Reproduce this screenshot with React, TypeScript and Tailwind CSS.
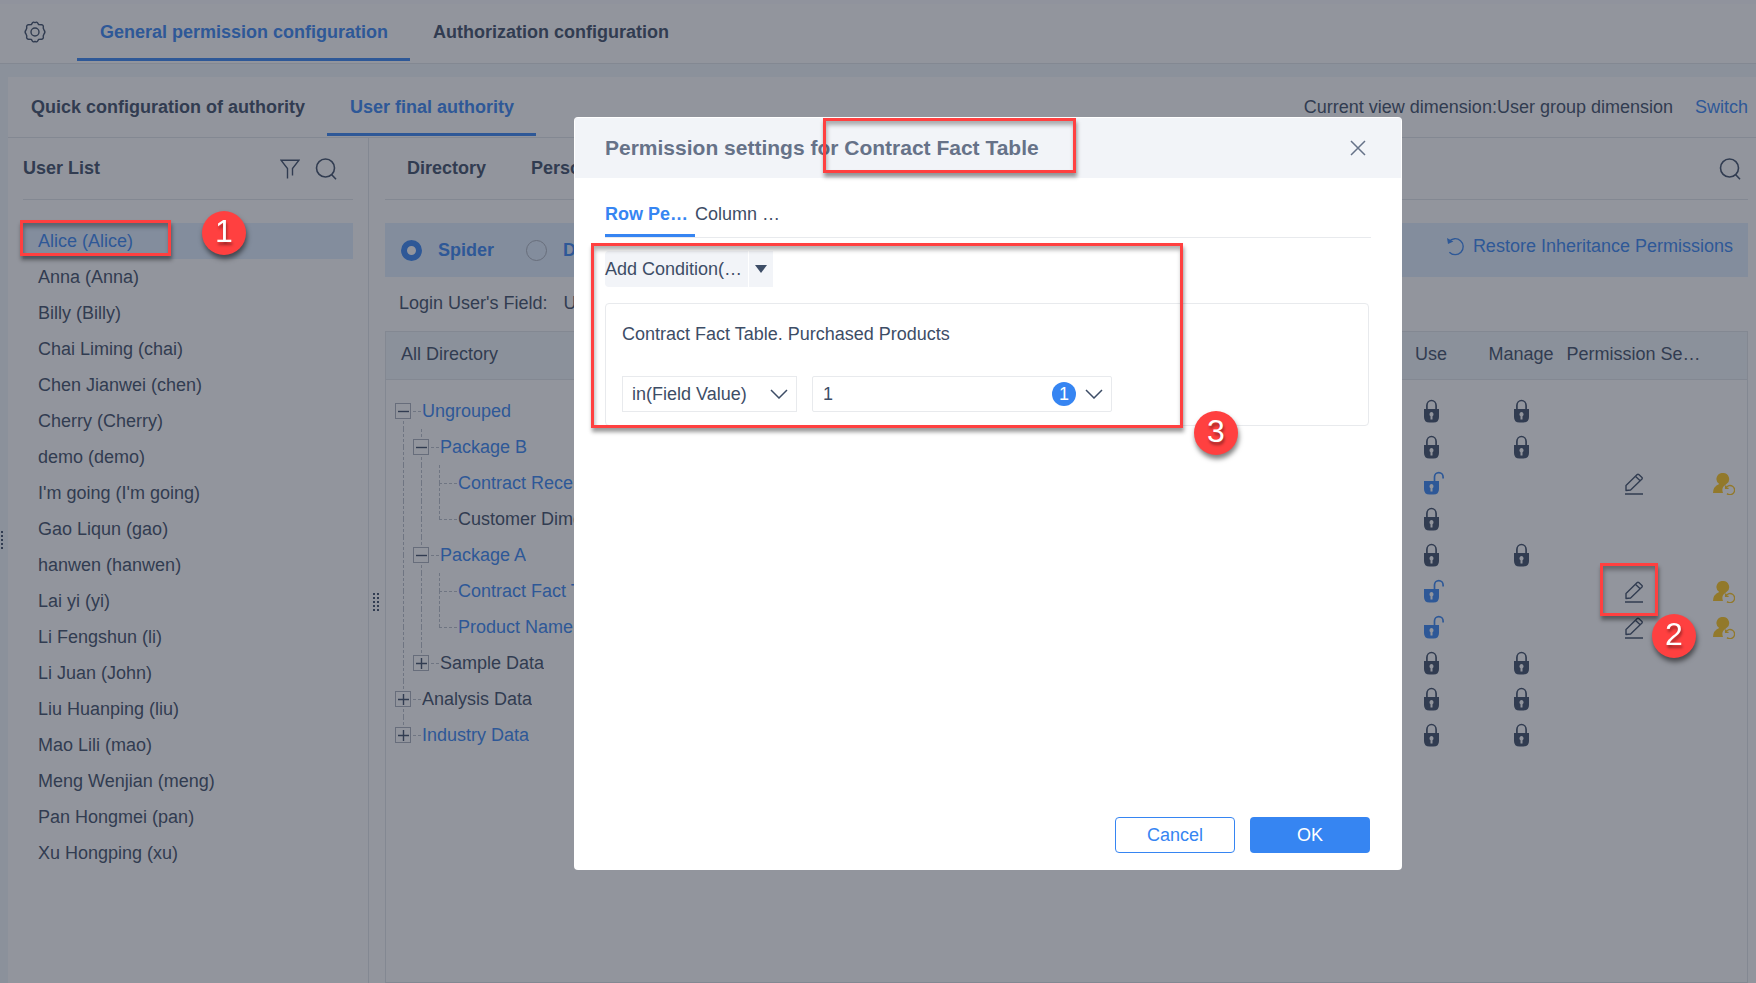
import React, { useState } from 'react';

type User = {
    name: string;
    account: string;
}

type LockState = 'locked' | 'unlocked' | 'none';

type TreeRow = {
    label: string;
    level: number;
    toggle?: 'open' | 'closed';
    active?: boolean;
    lines: string[];
    use: LockState;
    manage: LockState;
    edit?: boolean;
    mark?: boolean;
}

const users: User[] = [
    { name: 'Alice', account: 'Alice' },
    { name: 'Anna', account: 'Anna' },
    { name: 'Billy', account: 'Billy' },
    { name: 'Chai Liming', account: 'chai' },
    { name: 'Chen Jianwei', account: 'chen' },
    { name: 'Cherry', account: 'Cherry' },
    { name: 'demo', account: 'demo' },
    { name: "I'm going", account: "I'm going" },
    { name: 'Gao Liqun', account: 'gao' },
    { name: 'hanwen', account: 'hanwen' },
    { name: 'Lai yi', account: 'yi' },
    { name: 'Li Fengshun', account: 'li' },
    { name: 'Li Juan', account: 'John' },
    { name: 'Liu Huanping', account: 'liu' },
    { name: 'Mao Lili', account: 'mao' },
    { name: 'Meng Wenjian', account: 'meng' },
    { name: 'Pan Hongmei', account: 'pan' },
    { name: 'Xu Hongping', account: 'xu' },
];

// lines: connector per indent column, "full", "top", "bottom" or "none"
const rows: TreeRow[] = [
    { label: 'Ungrouped', level: 0, toggle: 'open', active: true, lines: ['bottom'], use: 'locked', manage: 'locked' },
    { label: 'Package B', level: 1, toggle: 'open', active: true, lines: ['full', 'full'], use: 'locked', manage: 'locked' },
    { label: 'Contract Receivable Fact', level: 2, active: true, lines: ['full', 'full', 'full'], use: 'unlocked', manage: 'none', edit: true },
    { label: 'Customer Dimension Table', level: 2, lines: ['full', 'full', 'top'], use: 'locked', manage: 'none' },
    { label: 'Package A', level: 1, toggle: 'open', active: true, lines: ['full', 'full'], use: 'locked', manage: 'locked' },
    { label: 'Contract Fact Table', level: 2, active: true, lines: ['full', 'full', 'full'], use: 'unlocked', manage: 'none', edit: true, mark: true },
    { label: 'Product Name Dimension', level: 2, active: true, lines: ['full', 'full', 'top'], use: 'unlocked', manage: 'none', edit: true },
    { label: 'Sample Data', level: 1, toggle: 'closed', lines: ['full', 'top'], use: 'locked', manage: 'locked' },
    { label: 'Analysis Data', level: 0, toggle: 'closed', lines: ['full'], use: 'locked', manage: 'locked' },
    { label: 'Industry Data', level: 0, toggle: 'closed', active: true, lines: ['top'], use: 'locked', manage: 'locked' },
];

const GearIcon = () => (
    <svg width="24" height="24" viewBox="0 0 24 24" fill="none" stroke="#3d4d66" strokeWidth="1.4" strokeLinejoin="round">
        <path d="M9.2 3.2 Q10 1.5 12 2.6 Q14 1.5 14.8 3.2 L15.6 4.6 L18.6 4.7 Q21 5.4 20.2 8 L21 10 Q22.8 12 21 14 L20.2 16 Q21 18.6 18.6 19.3 L15.6 19.4 L14.8 20.8 Q14 22.5 12 21.4 Q10 22.5 9.2 20.8 L8.4 19.4 L5.4 19.3 Q3 18.6 3.8 16 L3 14 Q1.2 12 3 10 L3.8 8 Q3 5.4 5.4 4.7 L8.4 4.6 Z" />
        <circle cx="12" cy="12" r="4" />
    </svg>
);

const SearchIcon = () => (
    <svg width="22" height="22" viewBox="0 0 22 22" fill="none" stroke="#3d4d66" strokeWidth="1.6">
        <circle cx="10.5" cy="10" r="9" />
        <path d="M16.5 16.5 L21 21.2" />
    </svg>
);

const FilterIcon = () => (
    <svg width="20" height="20" viewBox="0 0 20 20" fill="none" stroke="#3d4d66" strokeWidth="1.4">
        <path d="M7.5 19.5 V9.5 L1 1.2 H19 L12.5 9.5 V16.5" />
    </svg>
);

const ChevronIcon = () => (
    <svg width="18" height="10" viewBox="0 0 18 10" fill="none" stroke="#3d4d66" strokeWidth="1.5">
        <path d="M1 1 L9 9 L17 1" />
    </svg>
);

const UndoIcon = () => (
    <svg width="18" height="19" viewBox="0 0 18 19" fill="none" stroke="#3685f2" strokeWidth="1.4">
        <path d="M2 4.6 A8 8 0 1 1 2.4 15.2" />
        <path d="M0 1 L1 7 L6.4 4.6 Z" fill="#3685f2" stroke="none" />
    </svg>
);

const LockIcon = ({ state }: { state: LockState }) => {
    if (state === 'none') return null;

    const open = state === 'unlocked';
    const color = open ? '#3685f2' : '#3d4d66';

    return (
        <svg width="22" height="24" viewBox="0 0 22 24" className="ml-2">
            <path
                d={open ? 'M10.5 11 V6 A4.3 4.3 0 0 1 19.1 6 V7.5' : 'M2.9 11 V6.5 A4.6 5 0 0 1 12.1 6.5 V11'}
                fill="none"
                stroke={color}
                strokeWidth="1.7"
            />
            <path
                d="M0 10 H15 V18 Q15 23.5 9.5 23.5 H5.5 Q0 23.5 0 18 Z M7.5 13 A2.3 2.3 0 0 0 6.5 17.2 V20.5 H8.5 V17.2 A2.3 2.3 0 0 0 7.5 13 Z"
                fill={color}
                fillRule="evenodd"
            />
        </svg>
    );
};

const EditIcon = () => (
    <svg width="20" height="22" viewBox="0 0 20 22" fill="none" stroke="#3d4d66" strokeWidth="1.4" strokeLinejoin="round">
        <path d="M2 17.5 V12.6 L13.2 1.6 Q14 1 14.8 1.6 L18 4.6 Q18.6 5.2 18 6 L6.6 17 Z" />
        <path d="M11.6 3.4 L16.2 7.8 M1 21 H19" />
    </svg>
);

const InheritIcon = () => (
    <svg width="22" height="22" viewBox="0 0 22 22">
        <path d="M10 0 A6 6 0 0 1 14 10.6 L10.5 13.4 Q8.5 16 10 20 H0 Q0 13.5 6.2 11 A6 6 0 0 1 10 0 Z" fill="#ffc61a" />
        <path d="M13 14.8 A4.6 4.6 0 1 1 14 20.6 M12.6 12.6 V15.4 H15.6" fill="none" stroke="#ffc61a" strokeWidth="1.4" />
    </svg>
);

const Marker = ({ value, className }: { value: number; className: string }) => (
    <span className={`absolute z-20 flex h-11 w-11 items-center justify-center rounded-full bg-[#ff4040] pb-1 text-[32px] leading-none text-white shadow-[1px_4px_5px_rgba(0,0,0,0.5)] [text-shadow:1px_3px_3px_rgba(0,0,0,0.4)] ${className}`}>
        {value}
    </span>
);

const Frame = ({ className }: { className: string }) => (
    <span className={`pointer-events-none absolute z-20 border-3 border-[#ff4040] shadow-[1px_4px_4px_rgba(0,0,0,0.4),inset_1px_4px_4px_rgba(0,0,0,0.3)] ${className}`} />
);

const Grip = ({ columns }: { columns: number }) => (
    <svg width={columns * 5} height="20" viewBox={`0 0 ${columns * 5} 20`} fill="#3d4d66">
        {Array.from({ length: columns * 5 }, (_, i) => (
            <rect key={i} x={(i % columns) * 4} y={Math.floor(i / columns) * 4} width="2" height="2" />
        ))}
    </svg>
);

const TreeCell = ({ row }: { row: TreeRow }) => (
    <div className="flex h-9 items-center pl-2">
        {row.lines.map((line, col) => {
            const own = col === row.level;
            return (
                <span key={col} className="relative flex h-9 w-[18px] shrink-0 items-center justify-center">
                    {(line === 'full' || line === 'top') && (
                        <span className="absolute top-0 left-[9px] h-[18px] border-l border-dashed border-[#b9bec8]" />
                    )}
                    {(line === 'full' || line === 'bottom') && (
                        <span className="absolute bottom-0 left-[9px] h-[18px] border-l border-dashed border-[#b9bec8]" />
                    )}
                    {own && (
                        <span className="absolute top-[18px] left-[9px] w-[18px] border-t border-dashed border-[#b9bec8]" />
                    )}
                    {own && row.toggle && (
                        <button aria-label={`Toggle ${row.label}`} className="relative flex h-4 w-4 items-center justify-center border border-[#a9afba] bg-white">
                            <svg width="11" height="11" viewBox="0 0 11 11" stroke="#3d4d66" strokeWidth="1.4">
                                <path d={row.toggle === 'open' ? 'M0 5.5 H11' : 'M0 5.5 H11 M5.5 0 V11'} />
                            </svg>
                        </button>
                    )}
                </span>
            );
        })}
        <span className={`ml-[10px] truncate ${row.active ? 'text-[#3685f2]' : ''}`}>{row.label}</span>
    </div>
);

const PermissionDialog = () => (
    <div role="dialog" aria-labelledby="dialog-title" className="flex h-[753px] w-[828px] flex-col rounded-sm bg-white p-px">
        <div className="relative flex h-[60px] items-center justify-between bg-[#f2f4f8] px-[30px]">
            <h2 id="dialog-title" className="text-[21px] font-bold text-[#667288]">Permission settings for Contract Fact Table</h2>
            <button aria-label="Close" className="mr-[5px]">
                <svg width="16" height="16" viewBox="0 0 16 16" stroke="#667288" strokeWidth="1.5">
                    <path d="M1 1 L15 15 M15 1 L1 15" />
                </svg>
            </button>
            <Frame className="top-0 left-[248px] h-[55px] w-[253px]" />
        </div>

        <div className="flex flex-1 flex-col px-[30px] pt-3">
            <div role="tablist" className="flex h-12 border-b border-[#e8eaed]">
                <button role="tab" aria-selected="true" className="w-[90px] border-b-3 border-[#3685f2] pt-[3px] text-left font-bold text-[#3685f2]">Row Pe…</button>
                <button role="tab" aria-selected="false" className="w-[90px] text-left">Column …</button>
            </div>

            <div className="relative mt-[13px] mr-[2px]">
                <div className="flex h-9 gap-px">
                    <button className="w-[143px] rounded-l-sm bg-[#f2f4f8] text-left">Add Condition(…</button>
                    <button aria-label="More conditions" className="flex w-6 items-center justify-center bg-[#f2f4f8]">
                        <svg width="12" height="8" viewBox="0 0 12 8" fill="#3d4d66"><path d="M0 0 H12 L6 8 Z" /></svg>
                    </button>
                </div>

                <div className="mt-4 h-[123px] rounded-sm border border-[#e8eaed] px-4 pt-[18px]">
                    <p className="leading-6">Contract Fact Table. Purchased Products</p>
                    <div className="mt-[30px] flex gap-[15px]">
                        <button aria-haspopup="listbox" className="flex h-9 w-[175px] items-center justify-between border border-[#e8eaed] pr-2 pl-[9px]">
                            in(Field Value)
                            <ChevronIcon />
                        </button>
                        <button aria-haspopup="listbox" className="flex h-9 w-[300px] items-center rounded-xs border border-[#e8eaed] pr-2 pl-[10px]">
                            <span className="flex-1 text-left">1</span>
                            <span className="mr-[9px] flex h-6 w-6 items-center justify-center rounded-full bg-[#3685f2] text-white">1</span>
                            <ChevronIcon />
                        </button>
                    </div>
                </div>
                <Frame className="-top-2 -left-[14px] h-[185px] w-[592px]" />
                <Marker value={3} className="top-[160px] left-[589px]" />
            </div>

            <div className="mt-auto mr-px mb-4 flex justify-end gap-[15px]">
                <button className="h-9 w-[120px] rounded-sm border border-[#3685f2] text-[#3685f2]">Cancel</button>
                <button className="h-9 w-[120px] rounded-sm bg-[#3685f2] text-white">OK</button>
            </div>
        </div>
    </div>
);

const App = () => {
    const [target, setTarget] = useState<string>('spider');

    return (
        <div className="flex min-h-screen flex-col bg-[#f1f6fa] font-['Liberation_Sans',Arial,sans-serif] text-lg leading-6 text-[#3d4d66]">
            <header className="flex h-16 items-stretch border-t-4 border-b border-t-[#fafafe] border-b-[#e1e4e9] bg-white pl-[23px]">
                <button aria-label="Settings" className="mr-[30px] mb-1"><GearIcon /></button>
                <button className="mb-[2px] border-b-3 border-[#3685f2] pt-px pr-[22px] pl-[23px] font-bold text-[#3685f2]">General permission configuration</button>
                <button className="mb-1 pr-[22px] pl-[23px] font-bold">Authorization configuration</button>
            </header>

            <div className="mt-[13px] flex flex-1">
                <div className="flex w-2 items-center pt-[22px] pl-px"><Grip columns={1} /></div>

                <main className="flex flex-1 flex-col bg-white">
                    <div className="flex h-[61px] items-stretch border-b border-[#e1e4e9] pr-2">
                        <button className="pr-[22px] pl-[23px] font-bold">Quick configuration of authority</button>
                        <button className="mb-px border-b-3 border-[#3685f2] pt-1 pr-[22px] pl-[23px] font-bold text-[#3685f2]">User final authority</button>
                        <div className="ml-auto flex items-center gap-[22px]">
                            <span>Current view dimension:User group dimension</span>
                            <a href="#switch" className="text-[#3685f2]">Switch</a>
                        </div>
                    </div>

                    <div className="flex flex-1">
                        <aside className="w-[361px] border-r border-[#e1e4e9] px-[15px]">
                            <div className="flex h-[62px] items-center border-b border-[#e1e4e9]">
                                <h2 className="flex-1 pb-[2px] font-bold">User List</h2>
                                <button aria-label="Filter" className="mr-[15px]"><FilterIcon /></button>
                                <button aria-label="Search users" className="mr-4"><SearchIcon /></button>
                            </div>
                            <ul className="mt-[23px]">
                                {users.map((user, index) => (
                                    <li key={user.name} className={index === 0 ? 'relative bg-[#e1efff]' : ''}>
                                        <button className={`h-9 w-full px-[15px] text-left ${index === 0 ? 'text-[#3685f2]' : ''}`}>
                                            {user.name} ({user.account})
                                        </button>
                                        {index === 0 && <Frame className="-top-[3px] -left-[3px] h-9 w-[151px]" />}
                                        {index === 0 && <Marker value={1} className="-top-3 left-[179px]" />}
                                    </li>
                                ))}
                            </ul>
                        </aside>

                        <div className="flex w-4 items-center justify-center pt-[84px] pl-[2px]"><Grip columns={2} /></div>

                        <section className="flex min-w-0 flex-1 flex-col pr-2">
                            <div className="flex h-[62px] items-center gap-[45px] border-b border-[#e1e4e9] pl-[22px]">
                                <button className="pb-[2px] font-bold">Directory</button>
                                <button className="pb-[2px] font-bold">Personnel</button>
                                <button aria-label="Search directory" className="mr-[7px] ml-auto"><SearchIcon /></button>
                            </div>

                            <div className="mt-[23px] flex h-[54px] items-center bg-[#e1efff] pr-[15px] pl-4 text-[#3685f2]">
                                <label className="mr-8 flex items-center gap-4 font-bold">
                                    <input
                                        type="radio"
                                        name="target"
                                        checked={target === 'spider'}
                                        onChange={() => setTarget('spider')}
                                        className="h-[21px] w-[21px] appearance-none rounded-full border border-[#a9afba] checked:border-6 checked:border-[#3685f2] checked:bg-white"
                                    />
                                    Spider
                                </label>
                                <label className="flex items-center gap-4 font-bold">
                                    <input
                                        type="radio"
                                        name="target"
                                        checked={target === 'data'}
                                        onChange={() => setTarget('data')}
                                        className="h-[21px] w-[21px] appearance-none rounded-full border border-[#a9afba] checked:border-6 checked:border-[#3685f2] checked:bg-white"
                                    />
                                    Data
                                </label>
                                <button className="mb-2 ml-auto flex items-center gap-2"><UndoIcon />Restore Inheritance Permissions</button>
                            </div>

                            <p className="flex h-[54px] items-center gap-4 pb-[2px] pl-[14px]">
                                <span>Login User's Field:</span>
                                <span>Username</span>
                            </p>

                            <div className="flex-1 border border-[#e1e4e9]">
                                <table className="w-full table-fixed">
                                    <thead>
                                        <tr className="h-[47px] border-b border-[#e1e4e9] bg-[#f1f6fa]">
                                            <th className="pb-[2px] pl-[15px] text-left font-normal">All Directory</th>
                                            <th className="w-[90px] pb-[2px] font-normal">Use</th>
                                            <th className="w-[90px] pb-[2px] font-normal">Manage</th>
                                            <th className="w-[135px] pb-[2px] font-normal">Permission Se…</th>
                                            <th className="w-[46px]" />
                                        </tr>
                                    </thead>
                                    <tbody>
                                        <tr className="h-[14px]"><td colSpan={5} /></tr>
                                        {rows.map((row) => (
                                            <tr key={row.label} className="h-9">
                                                <td><TreeCell row={row} /></td>
                                                <td><div className="flex justify-center"><LockIcon state={row.use} /></div></td>
                                                <td><div className="flex justify-center"><LockIcon state={row.manage} /></div></td>
                                                <td>
                                                    {row.edit && (
                                                        <div className="relative flex justify-center pt-[2px]">
                                                            <button aria-label={`Edit ${row.label}`}><EditIcon /></button>
                                                            {row.mark && <Frame className="-top-4 left-[34px] h-[53px] w-[58px]" />}
                                                            {row.mark && <Marker value={2} className="top-[35px] left-[86px]" />}
                                                        </div>
                                                    )}
                                                </td>
                                                <td>{row.edit && <div className="flex justify-center pt-[2px]"><InheritIcon /></div>}</td>
                                            </tr>
                                        ))}
                                    </tbody>
                                </table>
                            </div>
                        </section>
                    </div>
                </main>
            </div>

            <div className="fixed inset-0 z-10 flex items-center justify-end bg-[#252b3c]/50 pt-1 pr-[354px]">
                <PermissionDialog />
            </div>
        </div>
    );
};

export default App;
